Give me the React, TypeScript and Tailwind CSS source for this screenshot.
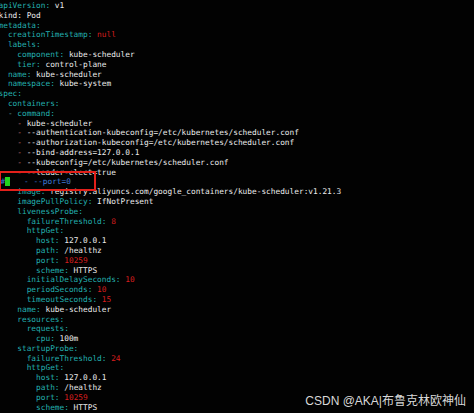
import React from "react";

// yaml line pieces: [text, kind]
type Kind = "k" | "v" | "n" | "d" | "c" | "s" | "p";
type Seg = [string, Kind];

const colors: Record<Kind, string> = {
  k: "text-[#22b0b0]",
  v: "text-[#ececec]",
  n: "text-[#d81e1e]",
  d: "text-[#c67272]",
  c: "text-[#3d73c4]",
  s: "text-[#ececec]",
  p: "text-[#5f9e9e]",
};

const kv = (indent: number, key: string, val?: string, num = false): Seg[] => {
  const segs: Seg[] = [[" ".repeat(indent), "s"], [key + ":", "k"]];
  if (val !== undefined) segs.push([" " + val, num ? "n" : "v"]);
  return segs;
};

const item = (indent: number, val: string): Seg[] => [
  [" ".repeat(indent), "s"],
  ["-", "d"],
  [" " + val, "v"],
];

const lines: Seg[][] = [
  kv(0, "apiVersion", "v1"),
  [["kind: Pod", "v"]],
  kv(0, "metadata"),
  kv(2, "creationTimestamp", "null", true),
  kv(2, "labels"),
  kv(4, "component", "kube-scheduler"),
  kv(4, "tier", "control-plane"),
  kv(2, "name", "kube-scheduler"),
  kv(2, "namespace", "kube-system"),
  kv(0, "spec"),
  kv(2, "containers"),
  [["  ", "s"], ["-", "p"], [" ", "s"], ["command:", "k"]],
  item(4, "kube-scheduler"),
  item(4, "--authentication-kubeconfig=/etc/kubernetes/scheduler.conf"),
  item(4, "--authorization-kubeconfig=/etc/kubernetes/scheduler.conf"),
  item(4, "--bind-address=127.0.0.1"),
  item(4, "--kubeconfig=/etc/kubernetes/scheduler.conf"),
  item(4, "--leader-elect=true"),
  [], // commented port line, drawn separately
  kv(4, "image", "registry.aliyuncs.com/google_containers/kube-scheduler:v1.21.3"),
  kv(4, "imagePullPolicy", "IfNotPresent"),
  kv(4, "livenessProbe"),
  kv(6, "failureThreshold", "8", true),
  kv(6, "httpGet"),
  kv(8, "host", "127.0.0.1"),
  kv(8, "path", "/healthz"),
  kv(8, "port", "10259", true),
  kv(8, "scheme", "HTTPS"),
  kv(6, "initialDelaySeconds", "10", true),
  kv(6, "periodSeconds", "10", true),
  kv(6, "timeoutSeconds", "15", true),
  kv(4, "name", "kube-scheduler"),
  kv(4, "resources"),
  kv(6, "requests"),
  kv(8, "cpu", "100m"),
  kv(4, "startupProbe"),
  kv(6, "failureThreshold", "24", true),
  kv(6, "httpGet"),
  kv(8, "host", "127.0.0.1"),
  kv(8, "path", "/healthz"),
  kv(8, "port", "10259", true),
  kv(8, "scheme", "HTTPS"),
];

export default function App() {
  return (
    <div className="relative w-[474px] h-[413px] overflow-hidden bg-[#020202]">
      <div
        className="ml-[-1.5px] pt-[1px] flex flex-col text-[7.8px] leading-[9.8px] whitespace-pre"
        style={{ fontFamily: '"DejaVu Sans Mono", "Liberation Mono", monospace' }}
      >
        {lines.map((segs, i) =>
          i === 18 ? (
            <div key={i} className="h-[9.8px] pl-[2px] text-[#3f7bd6]">
              <span>#</span>
              <span className="bg-[#22d41e]"> </span>
              <span>{"   - --port=0"}</span>
            </div>
          ) : (
            <div key={i} className="h-[9.8px]">
              {segs.map(([t, k], j) => (
                <span key={j} className={colors[k]}>
                  {t}
                </span>
              ))}
            </div>
          )
        )}
      </div>

      {/* red highlight box */}
      <div className="absolute left-[-1px] top-[171px] w-[97px] h-[20px] border-2 border-[#e3201b]" />

      {/* watermark */}
      <div
        className="absolute right-[8px] bottom-[3px] text-[12px] text-[#d8d8d8]"
        style={{ fontFamily: '"Liberation Sans", "Noto Sans CJK SC", sans-serif' }}
      >
        CSDN @AKA|布鲁克林欧神仙
      </div>
    </div>
  );
}
